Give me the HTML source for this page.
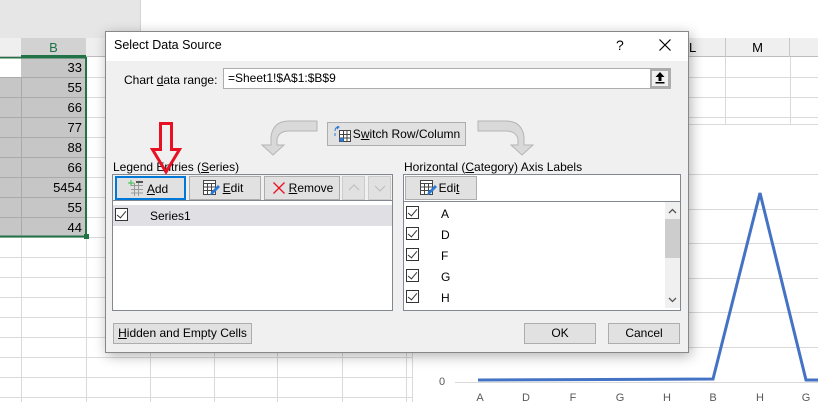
<!DOCTYPE html>
<html><head><meta charset="utf-8">
<style>
*{margin:0;padding:0;box-sizing:border-box}
body{width:818px;height:402px;overflow:hidden;position:relative;background:#fff;font-family:"Liberation Sans",sans-serif;font-size:12px;color:#000}
.a{position:absolute}
.btn{position:absolute;background:#e1e1e1;border:1px solid #adadad;text-align:center;line-height:18px;font-size:12px}
u{text-decoration:underline}
.cb{position:absolute;width:13px;height:13px;border:1px solid #333;background:#fff}
.cb:after{content:"";position:absolute;left:3px;top:0px;width:4px;height:8px;border:solid #333;border-width:0 1.5px 1.5px 0;transform:rotate(40deg)}
.num{position:absolute;right:0;width:64px;text-align:right;padding-right:4px;font-size:13px}
</style></head><body>
<!-- excel background -->
<div class="a" style="left:0;top:0;width:140px;height:38px;background:#e6e6e6"></div>
<div class="a" style="left:140px;top:0;width:1px;height:38px;background:#d4d4d4"></div>
<div class="a" style="left:0;top:38px;width:818px;height:19px;background:#efefef;border-bottom:1px solid #bdbdbd"></div>
<div class="a" style="left:21px;top:38px;width:65px;height:19px;background:#d2d2d2;border-bottom:2px solid #217346;color:#217346;text-align:center;line-height:19px;font-size:13px">B</div>
<div class="a" style="left:689px;top:38px;font-size:13px;line-height:19px">L</div>
<div class="a" style="left:725px;top:38px;width:65px;height:19px;border-left:1px solid #c8c8c8;border-right:1px solid #c8c8c8;text-align:center;line-height:19px;font-size:13px">M</div>
<svg class="a" style="left:0;top:0" width="818" height="402">
<g stroke="#dadada" stroke-width="1">
<line x1="0" y1="77.5" x2="818" y2="77.5"/><line x1="0" y1="97.5" x2="818" y2="97.5"/><line x1="0" y1="117.5" x2="818" y2="117.5"/>
<line x1="0" y1="137.5" x2="412" y2="137.5"/><line x1="0" y1="157.5" x2="412" y2="157.5"/><line x1="0" y1="177.5" x2="412" y2="177.5"/>
<line x1="0" y1="197.5" x2="412" y2="197.5"/><line x1="0" y1="217.5" x2="412" y2="217.5"/><line x1="0" y1="237.5" x2="412" y2="237.5"/>
<line x1="0" y1="257.5" x2="412" y2="257.5"/><line x1="0" y1="277.5" x2="412" y2="277.5"/><line x1="0" y1="297.5" x2="412" y2="297.5"/>
<line x1="0" y1="317.5" x2="412" y2="317.5"/><line x1="0" y1="337.5" x2="412" y2="337.5"/><line x1="0" y1="357.5" x2="412" y2="357.5"/>
<line x1="0" y1="377.5" x2="412" y2="377.5"/><line x1="0" y1="397.5" x2="412" y2="397.5"/>
<line x1="21.5" y1="57" x2="21.5" y2="402"/><line x1="86.5" y1="57" x2="86.5" y2="402"/><line x1="150.5" y1="57" x2="150.5" y2="402"/>
<line x1="214.5" y1="57" x2="214.5" y2="402"/><line x1="277.5" y1="57" x2="277.5" y2="402"/><line x1="342.5" y1="57" x2="342.5" y2="402"/><line x1="406.5" y1="57" x2="406.5" y2="402"/><line x1="412.5" y1="57" x2="412.5" y2="402"/>
<line x1="725.5" y1="57" x2="725.5" y2="124"/><line x1="790.5" y1="57" x2="790.5" y2="124"/>
<line x1="412" y1="124.5" x2="818" y2="124.5"/>
</g>
<g stroke="#d9d9d9"><line x1="440" y1="174.5" x2="818" y2="174.5"/><line x1="440" y1="209.5" x2="818" y2="209.5"/><line x1="440" y1="243.5" x2="818" y2="243.5"/><line x1="440" y1="278.5" x2="818" y2="278.5"/><line x1="440" y1="312.5" x2="818" y2="312.5"/><line x1="440" y1="347.5" x2="818" y2="347.5"/><line x1="455" y1="382.5" x2="818" y2="382.5"/></g>
<polyline points="478,380 713,379 760,193 806,380 818,380" fill="none" stroke="#4472c4" stroke-width="3"/>
<g font-family="Liberation Sans" font-size="11" fill="#595959" text-anchor="middle">
<text x="442" y="385">0</text><text x="480" y="401">A</text><text x="526" y="401">D</text><text x="573" y="401">F</text><text x="620" y="401">G</text><text x="667" y="401">H</text><text x="713" y="401">B</text><text x="760" y="401">H</text><text x="806" y="401">G</text>
</g>
</svg>
<div class="a" style="left:0;top:57px;width:86px;height:180px;background:#c6c6c6"></div>
<div class="a" style="left:0;top:58px;width:21px;height:19px;background:#fff"></div>
<svg class="a" style="left:0;top:57px" width="90" height="183"><g stroke="#aaa"><line x1="21.5" y1="20" x2="21.5" y2="180"/><line x1="0" y1="20.5" x2="86" y2="20.5"/><line x1="0" y1="40.5" x2="86" y2="40.5"/><line x1="0" y1="60.5" x2="86" y2="60.5"/><line x1="0" y1="80.5" x2="86" y2="80.5"/><line x1="0" y1="100.5" x2="86" y2="100.5"/><line x1="0" y1="120.5" x2="86" y2="120.5"/><line x1="0" y1="140.5" x2="86" y2="140.5"/><line x1="0" y1="160.5" x2="86" y2="160.5"/></g>
<rect x="-2" y="0.5" width="88" height="179" fill="none" stroke="#217346" stroke-width="2"/><rect x="84" y="177" width="5" height="5" fill="#217346"/></svg>
<div class="num" style="left:22px;top:60px">33</div><div class="num" style="left:22px;top:80px">55</div><div class="num" style="left:22px;top:100px">66</div><div class="num" style="left:22px;top:120px">77</div><div class="num" style="left:22px;top:140px">88</div><div class="num" style="left:22px;top:160px">66</div><div class="num" style="left:22px;top:180px">5454</div><div class="num" style="left:22px;top:200px">55</div><div class="num" style="left:22px;top:220px">44</div>

<!-- dialog -->
<div class="a" style="left:105px;top:31px;width:584px;height:322px;background:#f0f0f0;border:1px solid #888;box-shadow:2px 3px 12px rgba(0,0,0,.3)"></div>
<div class="a" style="left:106px;top:32px;width:582px;height:29px;background:#fff"></div>
<div class="a" style="left:114px;top:38px;font-size:12.5px">Select Data Source</div>
<div class="a" style="left:616px;top:37px;font-size:14px">?</div>
<svg class="a" style="left:659px;top:39px" width="12" height="12"><path d="M0.5 0.5L11.5 11.5M11.5 0.5L0.5 11.5" stroke="#000" stroke-width="1.2"/></svg>
<div class="a" style="left:124px;top:73px">Chart <u>d</u>ata range:</div>
<div class="a" style="left:223px;top:68px;width:448px;height:21px;background:#fff;border:1px solid #adadad;padding:3px 4px;line-height:13px">=Sheet1!$A$1:$B$9</div>
<div class="a" style="left:650px;top:69px;width:20px;height:19px;background:#f0f0f0;border:2px solid #adadad"></div>
<svg class="a" style="left:654px;top:71px" width="12" height="14"><path d="M6 1L1.5 6H4.5V10H7.5V6H10.5Z" fill="#000"/><rect x="1.5" y="11" width="9" height="1.5" fill="#000"/></svg>
<!-- curved arrows -->
<svg class="a" style="left:259px;top:119px" width="280" height="38">
<path d="M58 2H30Q14 2 12 18V26H3L14 36L25 26H18V20Q20 12 30 12H58Z" fill="#d9d9d9" stroke="#b5b5b5"/>
<path d="M219 2H247Q263 2 265 18V26H274L263 36L252 26H259V20Q257 12 247 12H219Z" fill="#d9d9d9" stroke="#b5b5b5"/>
</svg>
<div class="btn" style="left:327px;top:122px;width:139px;height:24px;line-height:22px;padding-left:20px">S<u>w</u>itch Row/Column</div>
<svg class="a" style="left:334px;top:126px" width="17" height="16"><rect x="5.5" y="4.5" width="11" height="11" fill="#fff" stroke="#444"/><path d="M5.5 8.5H16.5M5.5 12H16.5M9.5 4.5V15.5M13 4.5V15.5" stroke="#444"/><rect x="5.5" y="12" width="4" height="3.5" fill="#2a7ad5"/><path d="M1 5Q1 1 5 1M3 0L5 1L3 3M1 7V10" stroke="#2a7ad5" fill="none"/></svg>
<div class="a" style="left:113px;top:160px">Legend Entries (<u>S</u>eries)</div>
<div class="a" style="left:404px;top:160px">Horizontal (<u>C</u>ategory) Axis Labels</div>
<!-- left panel -->
<div class="a" style="left:112px;top:174px;width:281px;height:137px;background:#fff;border:1px solid #828790"></div>
<div class="a" style="left:113px;top:175px;width:279px;height:26px;background:#f0f0f0;border-bottom:1px solid #828790"></div>
<div class="btn" style="left:115px;top:176px;width:71px;height:24px;line-height:22px;border:2px solid #0078d7;padding-left:14px"><u>A</u>dd</div>
<svg class="a" style="left:128px;top:180px" width="16" height="16"><path d="M3 5.5H15M3 9.5H15M3 13H15M6.5 3V16M10.5 3V16" stroke="#9a9a9a"/><rect x="8" y="1" width="7" height="2" fill="#555"/><path d="M3 0V6M0 3H6" stroke="#3bbf4a"/></svg>
<div class="btn" style="left:189px;top:176px;width:72px;height:24px;line-height:22px;padding-left:16px"><u>E</u>dit</div>
<svg class="a" style="left:203px;top:180px" width="17" height="17"><rect x="0.5" y="0.5" width="12" height="14" fill="#fff" stroke="#444"/><path d="M0.5 3.5H12.5M0.5 7H12.5M0.5 10.5H12.5M4.5 3.5V15M8.5 3.5V15" stroke="#444"/><path d="M7 15L8 12L15 5L17 7L10 14Z" fill="#2a7ad5"/></svg>
<div class="btn" style="left:264px;top:176px;width:76px;height:24px;line-height:22px;padding-left:18px"><u>R</u>emove</div>
<svg class="a" style="left:273px;top:182px" width="12" height="12"><path d="M0.5 0.5L11.5 11.5M11.5 0.5L0.5 11.5" stroke="#e81123" stroke-width="1.3"/></svg>
<div class="btn" style="left:342px;top:176px;width:23px;height:24px;border-color:#ccc"></div>
<div class="btn" style="left:368px;top:176px;width:23px;height:24px;border-color:#ccc"></div>
<svg class="a" style="left:348px;top:184px" width="40" height="10"><path d="M1 6L6 1L11 6" stroke="#bbb" fill="none"/><path d="M27 2L32 7L37 2" stroke="#bbb" fill="none"/></svg>
<div class="a" style="left:113px;top:205px;width:279px;height:21px;background:#e0e0e4"></div>
<div class="cb" style="left:115px;top:208px"></div>
<div class="a" style="left:150px;top:209px">Series1</div>
<!-- right panel -->
<div class="a" style="left:403px;top:174px;width:278px;height:137px;background:#fff;border:1px solid #828790"></div>
<div class="a" style="left:404px;top:201px;width:276px;height:1px;background:#828790"></div>
<div class="btn" style="left:405px;top:176px;width:72px;height:24px;line-height:22px;padding-left:16px">Edi<u>t</u></div>
<svg class="a" style="left:420px;top:180px" width="17" height="17"><rect x="0.5" y="0.5" width="12" height="14" fill="#fff" stroke="#444"/><path d="M0.5 3.5H12.5M0.5 7H12.5M0.5 10.5H12.5M4.5 3.5V15M8.5 3.5V15" stroke="#444"/><path d="M7 15L8 12L15 5L17 7L10 14Z" fill="#2a7ad5"/></svg>
<div class="cb" style="left:406px;top:206px"></div><div class="a" style="left:441px;top:207px">A</div>
<div class="cb" style="left:406px;top:227px"></div><div class="a" style="left:441px;top:228px">D</div>
<div class="cb" style="left:406px;top:248px"></div><div class="a" style="left:441px;top:249px">F</div>
<div class="cb" style="left:406px;top:269px"></div><div class="a" style="left:441px;top:270px">G</div>
<div class="cb" style="left:406px;top:290px"></div><div class="a" style="left:441px;top:291px">H</div>
<div class="a" style="left:665px;top:202px;width:15px;height:106px;background:#f0f0f0"></div>
<div class="a" style="left:665px;top:219px;width:15px;height:39px;background:#cdcdcd"></div>
<svg class="a" style="left:667px;top:207px" width="11" height="96"><path d="M2 6L5.5 2.5L9 6M2 91L5.5 94.5L9 91" stroke="#555" stroke-width="1.3" fill="none"/></svg>
<!-- bottom buttons -->
<div class="btn" style="left:113px;top:323px;width:139px;height:21px"><u>H</u>idden and Empty Cells</div>
<div class="btn" style="left:524px;top:323px;width:72px;height:21px">OK</div>
<div class="btn" style="left:608px;top:323px;width:72px;height:21px">Cancel</div>
<!-- red arrow -->
<svg class="a" style="left:150px;top:122px" width="32" height="54"><path d="M10.5 1.5H21.5V27.5H29.5L16 50L2.5 27.5H10.5Z" fill="none" stroke="#e81123" stroke-width="3" stroke-linejoin="miter"/></svg>
</body></html>
